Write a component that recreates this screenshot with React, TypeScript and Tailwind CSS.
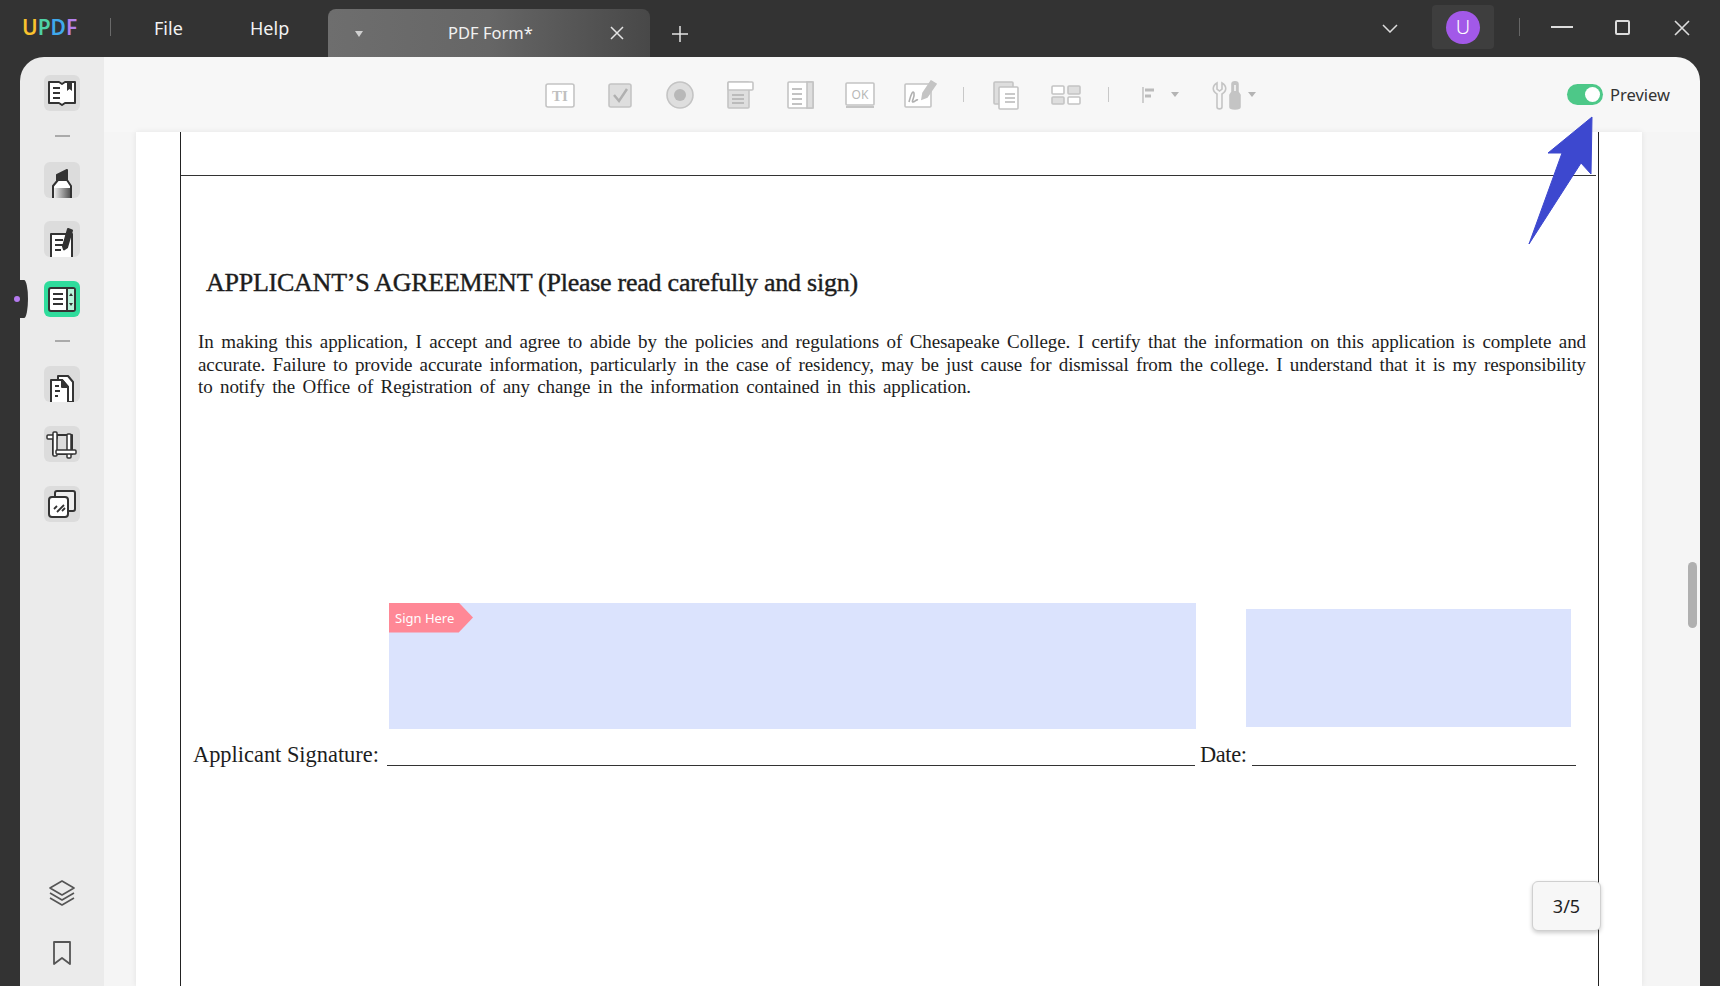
import React from "react";

const uiFont = { fontFamily: '"Noto Sans", sans-serif' };
const ink = "#333";
const gray = "#c4c4c4";

const SideBox = ({ children, active }: { children: React.ReactNode; active?: boolean }) => (
  <div className={`w-[36px] h-[36px] rounded-[6px] ${active ? "bg-[#2fdc9c]" : "bg-[#dcdcdc]"}`}>
    <svg width="36" height="36" viewBox="0 0 36 36" fill="none" stroke={ink} strokeWidth="2" strokeLinejoin="round">
      {children}
    </svg>
  </div>
);

const Dash = () => <div className="w-[15px] h-[2px] bg-[#aaa]" />;

const ToolIcon = ({ children, w = 60, className = "" }: { children: React.ReactNode; w?: number; className?: string }) => (
  <svg width={w} height="32" viewBox={`0 0 ${w} 32`} fill="none" stroke={gray} strokeWidth="1.6" className={`shrink-0 ${className}`}>
    {children}
  </svg>
);

const Caret = ({ x, y }: { x: number; y: number }) => (
  <path d={`M${x - 4} ${y - 2}h8l-4 5z`} fill="#b4b4b4" stroke="none" />
);

// top row of the window
const TitleBar = () => (
  <div className="h-[57px] shrink-0 flex items-start text-[#f2f2f2]" style={uiFont}>
    <div className="ml-[22px] mt-[13px] w-[58px] text-[21px] font-semibold leading-[28px] whitespace-nowrap">
      <span className="text-[#f9c22e]">U</span>
      <span className="text-[#4fd1a5]">P</span>
      <span className="text-[#3fa9ec]">D</span>
      <span className="text-[#b580ec]">F</span>
    </div>
    <div className="ml-[30px] mt-[18px] w-px h-[18px] bg-[#6a6a6a]" />
    <div className="ml-[43px] mt-[14px] w-[60px] text-[18px] leading-[28px]">File</div>
    <div className="ml-[36px] mt-[14px] w-[78px] text-[18px] leading-[28px]">Help</div>
    <div className="w-[322px] h-[48px] mt-[9px] rounded-t-[8px] bg-gradient-to-r from-[#6e6e6e] via-[#666] to-[#484848] flex items-center">
      <svg width="10" height="8" viewBox="0 0 10 8" className="ml-[26px] mt-[2px]">
        <path d="M1 1h8l-4 6z" fill="#d0d0d0" />
      </svg>
      <div className="ml-[84px] w-[162px] text-[16.5px] leading-[24px] whitespace-nowrap">PDF Form*</div>
      <svg width="14" height="14" viewBox="0 0 14 14" stroke="#e4e4e4" strokeWidth="1.5">
        <path d="M1 1l12 12M13 1L1 13" />
      </svg>
    </div>
    <svg width="18" height="18" viewBox="0 0 18 18" stroke="#e4e4e4" strokeWidth="1.5" className="ml-[21px] mt-[25px]">
      <path d="M9 1v16M1 9h16" />
    </svg>
    <svg width="16" height="9" viewBox="0 0 16 9" fill="none" stroke="#dcdcdc" strokeWidth="1.5" className="ml-[693px] mt-[24px]">
      <path d="M1 1l7 7 7-7" />
    </svg>
    <div className="ml-[34px] mt-[5px] w-[62px] h-[44px] rounded-[4px] bg-[#3e3e3e] flex items-center justify-center">
      <div className="w-[34px] h-[33px] rounded-full bg-[#a259e8] flex items-center justify-center text-[20px] font-light text-white">
        U
      </div>
    </div>
    <div className="ml-[25px] mt-[18px] w-px h-[18px] bg-[#666]" />
    <div className="ml-[31px] mt-[26px] w-[22px] h-[2px] bg-[#dcdcdc]" />
    <div className="ml-[42px] mt-[20px] w-[15px] h-[15px] border-2 border-[#dcdcdc] rounded-[2px]" />
    <svg width="16" height="16" viewBox="0 0 16 16" stroke="#dcdcdc" strokeWidth="1.6" className="ml-[44px] mt-[20px]">
      <path d="M1 1l14 14M15 1L1 15" />
    </svg>
  </div>
);

const Sidebar = () => (
  <div className="w-[84px] shrink-0 bg-[#ebebeb] flex flex-col items-center pt-[18px] pb-[21px]">
    <SideBox>
      <path d="M5 7h10l3 2 3-2h10v21H21l-3 2-3-2H5z" fill="#fff" />
      <path d="M23 6h5v10l-2.500-2-2.500 2z" fill={ink} stroke="none" />
      <path d="M9 13h7M9 18h7M9 23h7" />
    </SideBox>
    <div className="mt-[24px] mb-[25px]">
      <Dash />
    </div>
    <SideBox>
      <defs>
        <linearGradient id="marker" x1="0" y1="0" x2="1" y2="0">
          <stop offset="0" stopColor="#eee" />
          <stop offset="1" stopColor="#555" />
        </linearGradient>
      </defs>
      <path d="M13 18v-5l10-5v10z" fill={ink} />
      <path d="M9 36V24l5-6h9l4 6v12" fill="#fff" />
      <rect x="10" y="26" width="16" height="10" fill="url(#marker)" stroke="none" />
    </SideBox>
    <div className="mt-[23px]">
      <SideBox>
        <path d="M7 36V13h21v23" fill="#fff" />
        <path d="M11 19h8M11 24h8M11 29h6" />
        <path d="M24 8l4 1.500-5 17-3 2-1-3z" fill={ink} />
      </SideBox>
    </div>
    <div className="mt-[24px]">
      <SideBox active>
        <rect x="5" y="7" width="26" height="23" rx="2" fill="#fff" />
        <path d="M23 8h7v21h-7z" fill="#b8f2da" stroke="none" />
        <path d="M23 7v23" />
        <path d="M9 13h10M9 18h10M9 23h10" />
        <path d="M27 12l-2 3h4zM27 25l-2-3h4z" fill={ink} stroke="none" />
      </SideBox>
    </div>
    <div className="mt-[23px] mb-[24px]">
      <Dash />
    </div>
    <SideBox>
      <path d="M14 14v-4h10l5 6v20h-5" fill="#fff" />
      <path d="M7 36V14h11l6 7v15" fill="#fff" />
      <path d="M18 14l6 7h-6z" fill={ink} />
      <path d="M11 20h4M11 25h5M11 30h3" />
    </SideBox>
    <div className="mt-[24px]">
      <SideBox>
        <rect x="9" y="9" width="19" height="19" fill="#dcdcdc" />
        <rect x="3" y="9" width="10" height="4" rx="1" fill="#fff" strokeWidth="1.500" />
        <rect x="9" y="6" width="4" height="24" rx="1" fill="#fff" strokeWidth="1.500" />
        <rect x="23" y="8" width="4" height="24" rx="1" fill="#fff" strokeWidth="1.500" />
        <rect x="12" y="24" width="20" height="4" rx="1" fill="#fff" strokeWidth="1.500" />
      </SideBox>
    </div>
    <div className="mt-[24px]">
      <SideBox>
        <rect x="11" y="5" width="20" height="20" rx="2" fill="#eee" />
        <rect x="5" y="11" width="19" height="20" rx="3" fill="#fff" />
        <path d="M10 23l3-3M13 26l7-7M18 25l3-3" strokeWidth="1.800" />
      </SideBox>
    </div>
    <svg width="26" height="26" viewBox="0 0 26 26" fill="none" stroke="#555" strokeWidth="1.600" strokeLinejoin="round" className="mt-auto">
      <path d="M13 1l12 7-12 7L1 8z" />
      <path d="M1 13l12 7 12-7M1 18l12 7 12-7" />
    </svg>
    <svg width="18" height="24" viewBox="0 0 18 24" fill="none" stroke="#555" strokeWidth="1.800" strokeLinejoin="round" className="mt-[35px]">
      <path d="M1 1h16v22l-8-6-8 6z" />
    </svg>
  </div>
);

const ToolBar = () => (
  <div className="h-[75px] shrink-0 bg-[#f7f7f7] flex items-center pl-[426px]" style={uiFont}>
    <ToolIcon>
      <rect x="16" y="5" width="28" height="23" rx="2" fill="#fff" />
      <text x="30" y="22" textAnchor="middle" fontFamily="Liberation Serif, serif" fontSize="15" fontWeight="700" fill="#c0c0c0" stroke="none">TI</text>
    </ToolIcon>
    <ToolIcon>
      <rect x="19" y="5" width="22" height="23" rx="2" fill="#dedede" />
      <path d="M24 16l5 6 8-12" stroke="#b0b0b0" strokeWidth="2.500" />
    </ToolIcon>
    <ToolIcon>
      <ellipse cx="30" cy="16" rx="13" ry="13" fill="#dedede" />
      <circle cx="30" cy="16" r="6" fill="#b8b8b8" stroke="none" />
    </ToolIcon>
    <ToolIcon>
      <rect x="18" y="3" width="21" height="26" rx="1" fill="#dedede" />
      <rect x="18" y="3" width="25" height="8" rx="1" fill="#fff" />
      <path d="M22 16h12M22 20h12M22 24h12" stroke="#b0b0b0" />
    </ToolIcon>
    <ToolIcon>
      <rect x="18" y="3" width="25" height="26" rx="1" fill="#fff" />
      <path d="M37 3h6v26h-6z" fill="#dedede" />
      <path d="M22 10h10M22 15h10M22 20h10M22 25h10" stroke="#b0b0b0" />
    </ToolIcon>
    <ToolIcon>
      <rect x="16" y="4" width="28" height="22" rx="1" fill="#fff" />
      <path d="M16 28h28" strokeWidth="2" />
      <text x="30" y="20" textAnchor="middle" fontFamily="Noto Sans, sans-serif" fontSize="12" fill="#b8b8b8" stroke="none">OK</text>
    </ToolIcon>
    <ToolIcon>
      <rect x="15" y="5" width="26" height="23" rx="1" fill="#fff" />
      <path d="M19 23c2-8 4-12 5-9 1 4-3 9-1 9s3-3 5-2" stroke="#b0b0b0" />
      <path d="M41 2l5 3-9 13-5 2 1-6z" fill="#c4c4c4" />
    </ToolIcon>
    <div className="ml-[13px] w-px h-[15px] bg-[#c8c8c8]" />
    <ToolIcon w={58} className="ml-[15px]">
      <rect x="15" y="3" width="19" height="22" rx="1" fill="#dedede" />
      <rect x="20" y="8" width="19" height="22" rx="1" fill="#fff" />
      <path d="M26 15h10M26 19h10M26 23h10" stroke="#b8b8b8" />
    </ToolIcon>
    <svg width="30" height="20" viewBox="0 0 30 20" fill="none" stroke={gray} strokeWidth="1.600" className="shrink-0 ml-[14px]">
      <rect x="1" y="1" width="12" height="8" rx="1" fill="#fff" />
      <rect x="17" y="1" width="12" height="8" rx="1" fill="#dedede" />
      <rect x="1" y="12" width="12" height="7" rx="1" fill="#dedede" />
      <rect x="17" y="12" width="12" height="7" rx="1" fill="#fff" />
    </svg>
    <div className="ml-[27px] w-px h-[15px] bg-[#c8c8c8]" />
    <ToolIcon w={74}>
      <path d="M34 8v16" />
      <path d="M36 11h9" strokeWidth="3" stroke="#bbb" />
      <path d="M36 17h6" strokeWidth="3" stroke="#bbb" />
      <Caret x={66} y={15} />
    </ToolIcon>
    <ToolIcon w={48} className="ml-[28px]">
      <path d="M6 4C1 7 1 12 6 15v13c0 2.500 5 2.500 5 0V15c5-3 5-8 0-11v6l-2.500 2L6 10z" fill="#f7f7f7" />
      <path d="M21 13V5c0-3 6-3 6 0v8l2 3v12c0 2.500-10 2.500-10 0V16z" fill="#c4c4c4" />
      <path d="M24 6v6" stroke="#f7f7f7" />
      <Caret x={41} y={15} />
    </ToolIcon>
    <div className="ml-auto mr-[30px] flex items-center">
      <div className="w-[36px] h-[21px] rounded-full bg-[#4dc888] flex items-center justify-end pr-[3px]">
        <div className="w-[15px] h-[15px] rounded-full bg-white" />
      </div>
      <div className="ml-[7px] text-[16.5px] leading-[24px] text-[#333]">Preview</div>
    </div>
  </div>
);

const PdfPage = () => (
  <div
    className="ml-[44px] pt-[43px] w-[1419px] h-full border-x border-[#222] text-[#1d1d1d]"
    style={{ fontFamily: '"Liberation Serif", serif' }}
  >
    <div className="mr-[2px] h-px bg-[#333]" />
    <div className="mt-[92px] ml-[25px] text-[26px] leading-[30px] tracking-[-0.25px] [-webkit-text-stroke:0.4px_#1d1d1d] whitespace-nowrap">
      APPLICANT’S AGREEMENT (Please read carefully and sign)
    </div>
    <div className="mt-[33px] ml-[17px] w-[1388px] text-[19px] leading-[22.5px] tracking-[-0.1px]">
      <div className="text-justify [text-align-last:justify]">
        In making this application, I accept and agree to abide by the policies and regulations of Chesapeake College.  I certify that the information on this application is complete and
      </div>
      <div className="text-justify [text-align-last:justify]">
        accurate. Failure to provide accurate information, particularly in the case of residency, may be just cause for dismissal from the college. I understand that it is my responsibility
      </div>
      <div className="w-[773px] text-justify [text-align-last:justify]">
        to notify the Office of Registration of any change in the information contained in this application.
      </div>
    </div>
    <div className="mt-[204px] ml-[208px] flex items-start">
      <div className="w-[807px] h-[126px] bg-[#dbe3fd]">
        <div
          className="w-[84px] h-[30px] bg-[#ff8896] text-white text-[13px] leading-[30px] pl-[6px] whitespace-nowrap [clip-path:polygon(0_0,83%_0,100%_50%,83%_100%,0_100%)]"
          style={uiFont}
        >
          Sign Here
        </div>
      </div>
      <div className="ml-[50px] mt-[6px] w-[325px] h-[118px] bg-[#dbe3fd]" />
    </div>
    <div className="mt-[11px] ml-[12px] h-[26px] flex items-end text-[22.4px] leading-[22px] whitespace-nowrap">
      <div className="w-[194px]">Applicant Signature:</div>
      <div className="w-[808px] h-px bg-[#333]" />
      <div className="ml-[5px] w-[52px] tracking-[-0.4px]">Date:</div>
      <div className="w-[324px] h-px bg-[#333]" />
    </div>
  </div>
);

export default function App() {
  return (
    <div className="relative w-[1720px] h-[986px] bg-[#333] flex flex-col overflow-hidden">
      <TitleBar />
      <div className="flex-1 min-h-0 mx-[20px] rounded-t-[24px] overflow-hidden flex">
        <Sidebar />
        <div className="flex-1 min-w-0 flex flex-col">
          <ToolBar />
          <div className="flex-1 min-h-0 bg-[#f5f5f5] pl-[32px] pr-[58px]">
            <div className="h-full bg-white shadow-[0_0_6px_rgba(0,0,0,0.08)] overflow-hidden">
              <PdfPage />
            </div>
          </div>
        </div>
      </div>

      {/* active marker on the sidebar edge */}
      <div className="absolute left-[20px] top-[280px] w-[8px] h-[38px] rounded-r-[100%] bg-[#333]" />
      <div className="absolute left-[14px] top-[296px] w-[6px] h-[6px] rounded-full bg-[#b57af0]" />

      {/* scrollbar */}
      <div className="absolute left-[1688px] top-[562px] w-[9px] h-[66px] rounded-full bg-[#b0b0b0]" />

      {/* page counter */}
      <div
        className="absolute left-[1532px] top-[881px] w-[69px] h-[50px] rounded-[6px] border border-[#d0d0d0] bg-[#f7f7f7] shadow-[0_2px_4px_rgba(0,0,0,0.2)] flex items-center justify-center text-[18px] text-[#222]"
        style={uiFont}
      >
        3/5
      </div>

      {/* annotation arrow */}
      <svg width="80" height="140" viewBox="0 0 80 140" className="absolute left-[1520px] top-[112px]">
        <path d="M72 5L28 41h14L9 132l52-81 10 11z" fill="#3d48cf" stroke="#3d48cf" strokeLinejoin="round" />
      </svg>
    </div>
  );
}
